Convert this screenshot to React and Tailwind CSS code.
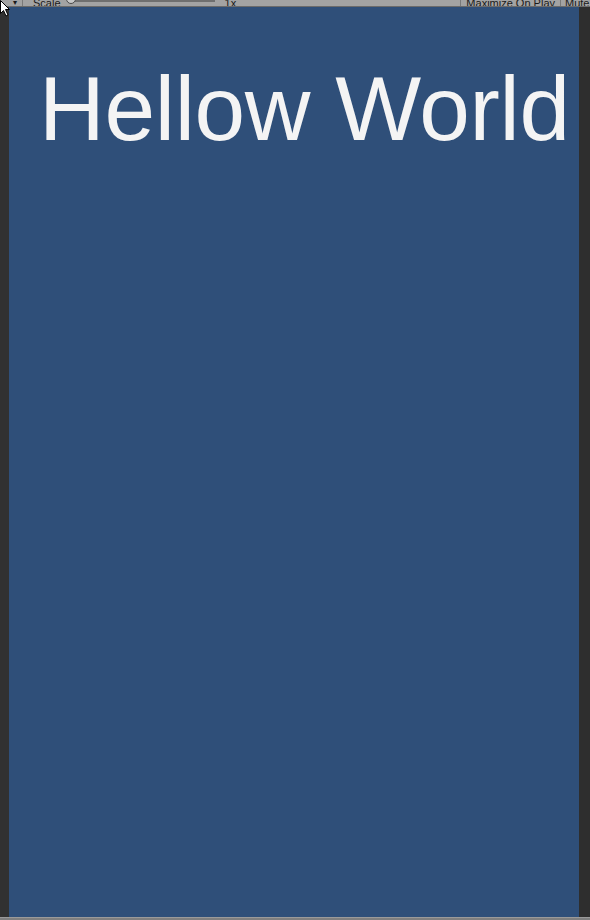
import React from "react";

export default function App() {
  return (
    <div className="relative w-[590px] h-[920px] flex flex-col overflow-hidden bg-[#303030]" style={{ fontFamily: '"Liberation Sans", Arial, sans-serif' }}>
      {/* top toolbar (cut off) */}
      <div className="h-[7px] shrink-0 bg-[#a3a3a3] border-b border-[#6b6b6b] flex items-end overflow-hidden text-[11px] leading-none text-[#1a1a1a]">
        <div className="w-[23px] h-full border-r border-[#7a7a7a] flex justify-end pr-[5px] items-end">
          <span className="-mb-[1px] text-[8px]">▾</span>
        </div>
        <div className="flex items-end h-full pl-[10px] gap-[6px]">
          <span className="-mb-[3px]">Scale</span>
          <div className="relative w-[148px] h-full">
            <div className="absolute left-0 right-0 top-0 h-[2px] bg-[#6f6f6f]" />
            <div className="absolute -left-[1px] -top-[6px] w-[10px] h-[10px] rounded-full border border-[#4a4a4a] bg-[#c8c8c8]" />
          </div>
          <span className="-mb-[3px] ml-[4px]">1x</span>
        </div>
        <div className="flex-1" />
        <div className="h-full border-l border-[#7a7a7a] px-[5px] flex items-end">
          <span className="-mb-[3px]">Maximize On Play</span>
        </div>
        <div className="h-full border-l border-[#7a7a7a] pl-[4px] w-[30px] flex items-end overflow-hidden">
          <span className="-mb-[3px]">Mute</span>
        </div>
      </div>

      {/* main area */}
      <div className="flex flex-1 min-h-0">
        <div className="w-[9px] shrink-0 bg-[#313131]" />
        <div className="flex-1 bg-[#2f4f79] pt-[56px] pl-[30px] overflow-hidden">
          <div className="text-[91px] leading-[91px] tracking-[-0.3px] text-[#f4f4f4] whitespace-nowrap">Hellow World</div>
        </div>
        <div className="w-[11px] shrink-0 bg-[#2e2e2e]" />
      </div>

      {/* bottom edge */}
      <div className="h-[3px] shrink-0 bg-[#7f7f7f] border-t border-[#9a9a9a]" />

      {/* mouse cursor */}
      <svg className="absolute left-0 top-0" width="12" height="18" viewBox="0 0 12 18">
        <path d="M0.5 0.5 L0.5 13.5 L3.5 10.5 L6 16 L8 15 L5.5 9.5 L9.5 9.5 Z" fill="#ffffff" stroke="#000000" strokeWidth="1" strokeLinejoin="miter" />
      </svg>
    </div>
  );
}
